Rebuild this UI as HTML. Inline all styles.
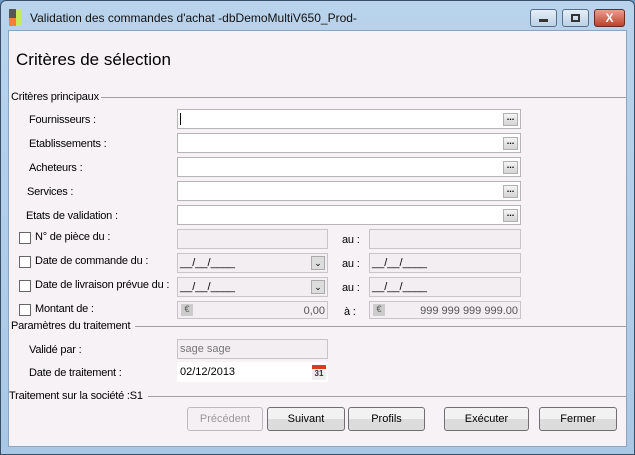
<!DOCTYPE html><html><head><style>
*{margin:0;padding:0;box-sizing:border-box}
body{width:635px;height:455px;overflow:hidden;font-family:"Liberation Sans",sans-serif;font-size:11px;color:#000;position:relative;background:#6f9cc4}
.a{position:absolute}
.frame{left:0;top:0;width:635px;height:455px;background:linear-gradient(#b9d3ec,#a9c8e6);border:1px solid #3a4e66;border-radius:6px 6px 0 0}
.client{left:8px;top:30px;width:619px;height:417px;background:#f6f2f6;border:1px solid #8aa5c2}
.in{position:absolute;height:20px;background:#fff;border:1px solid #b5b5b5}
.dis{background:#f2eef2;border-color:#c8c4c8}
.dots{position:absolute;right:2px;top:3px;width:15px;height:13px;background:linear-gradient(#f4f4f4,#d4d4d4);border:1px solid #b0b0b0;font-size:9px;line-height:6px;text-align:center;font-weight:bold}
.lbl{position:absolute;font-size:11px;letter-spacing:-.2px}
.cb{position:absolute;width:12px;height:12px;background:#fff;border:1px solid #666}
.line{position:absolute;height:1px;background:#a0a0a0}
.btn{position:absolute;top:407px;height:24px;border:1px solid #707070;border-radius:3px;background:linear-gradient(#f2f2f2 50%,#dcdcdc 50%);text-align:center;line-height:22px;font-size:11px}
.wb{position:absolute;top:9px;height:18px;border:1px solid #5a6e88;border-radius:3px;background:linear-gradient(#e4eef8,#bcd0e6)}
</style></head><body>
<div class="a frame"></div>
<div class="a" style="left:9px;top:9px;width:7px;height:9px;background:#555"></div>
<div class="a" style="left:9px;top:18px;width:7px;height:8px;background:#f08040"></div>
<div class="a" style="left:16px;top:9px;width:5px;height:17px;background:#c8e860"></div>
<div class="a" style="left:30px;top:11px;font-size:12px;color:#111">Validation des commandes d'achat -dbDemoMultiV650_Prod-</div>
<div class="wb" style="left:530px;width:27px"><div class="a" style="left:8px;top:9px;width:9px;height:3px;background:#333"></div></div>
<div class="wb" style="left:562px;width:27px"><div class="a" style="left:8px;top:4px;width:9px;height:8px;border:2px solid #333"></div></div>
<div class="wb" style="left:594px;width:31px;background:linear-gradient(#e8a090,#c0402a);border-color:#6a2a20;color:#fff;font-weight:bold;text-align:center;font-size:12px;line-height:16px">X</div>
<div class="a client"></div>
<div class="a" style="left:16px;top:50px;font-size:17px">Critères de sélection</div>
<div class="lbl" style="left:11px;top:91px">Critères principaux</div><div class="line" style="left:101px;top:97px;width:525px"></div>
<div class="lbl" style="left:29px;top:114px">Fournisseurs :</div>
<div class="lbl" style="left:29px;top:138px">Etablissements :</div>
<div class="lbl" style="left:29px;top:162px">Acheteurs :</div>
<div class="lbl" style="left:27px;top:186px">Services :</div>
<div class="lbl" style="left:26px;top:210px">Etats de validation :</div>
<div class="in" style="left:177px;top:109px;width:344px"><div class="a" style="left:2px;top:3px;width:1px;height:12px;background:#000"></div><div class="dots">...</div></div>
<div class="in" style="left:177px;top:133px;width:344px"><div class="dots">...</div></div>
<div class="in" style="left:177px;top:157px;width:344px"><div class="dots">...</div></div>
<div class="in" style="left:177px;top:181px;width:344px"><div class="dots">...</div></div>
<div class="in" style="left:177px;top:205px;width:344px"><div class="dots">...</div></div>
<div class="cb" style="left:19px;top:232px"></div><div class="lbl" style="left:35px;top:231px">N° de pièce du :</div>
<div class="cb" style="left:19px;top:256px"></div><div class="lbl" style="left:35px;top:255px">Date de commande du :</div>
<div class="cb" style="left:19px;top:280px"></div><div class="lbl" style="left:35px;top:279px">Date de livraison prévue du :</div>
<div class="cb" style="left:19px;top:304px"></div><div class="lbl" style="left:35px;top:303px">Montant de :</div>
<div class="in dis" style="left:177px;top:229px;width:151px"></div>
<div class="in dis" style="left:177px;top:253px;width:151px;padding:3px 2px">__/__/____<div class="a" style="right:2px;top:2px;width:14px;height:14px;background:#ddd;border:1px solid #aaa;font-size:9px;text-align:center;line-height:12px">&#8964;</div></div>
<div class="in dis" style="left:177px;top:277px;width:151px;padding:3px 2px">__/__/____<div class="a" style="right:2px;top:2px;width:14px;height:14px;background:#ddd;border:1px solid #aaa;font-size:9px;text-align:center;line-height:12px">&#8964;</div></div>
<div class="in dis" style="left:177px;top:301px;width:151px;height:18px;color:#555;text-align:right;padding:3px 2px">0,00<div class="a" style="left:3px;top:2px;width:12px;height:12px;background:#ccc;font-size:9px;text-align:center">€</div></div>
<div class="lbl" style="left:342px;top:234px">au :</div><div class="lbl" style="left:342px;top:258px">au :</div><div class="lbl" style="left:342px;top:282px">au :</div><div class="lbl" style="left:344px;top:306px">à :</div>
<div class="in dis" style="left:369px;top:229px;width:152px"></div>
<div class="in dis" style="left:369px;top:253px;width:152px;padding:3px 2px">__/__/____</div>
<div class="in dis" style="left:369px;top:277px;width:152px;padding:3px 2px">__/__/____</div>
<div class="in dis" style="left:369px;top:301px;width:152px;height:18px;color:#555;text-align:right;padding:3px 2px">999 999 999 999.00<div class="a" style="left:3px;top:2px;width:12px;height:12px;background:#ccc;font-size:9px;text-align:center">€</div></div>
<div class="lbl" style="left:11px;top:320px">Paramètres du traitement</div><div class="line" style="left:135px;top:326px;width:491px"></div>
<div class="lbl" style="left:29px;top:344px">Validé par :</div>
<div class="lbl" style="left:29px;top:367px">Date de traitement :</div>
<div class="in dis" style="left:177px;top:339px;width:151px;color:#777;padding:3px 2px">sage sage</div>
<div class="in" style="left:177px;top:362px;width:151px;border-color:#fff;padding:3px 2px">02/12/2013<div class="a" style="right:1px;top:2px;width:14px;height:15px;background:#eee;border-top:4px solid #d04020;font-size:8px;font-weight:bold;text-align:center;color:#333">31</div></div>
<div class="lbl" style="left:9px;top:390px">Traitement sur la société :S1</div><div class="line" style="left:148px;top:396px;width:478px"></div>
<div class="btn" style="left:187px;width:76px;color:#999;border-color:#bbb;background:#f4f0f4">Précédent</div>
<div class="btn" style="left:267px;width:78px">Suivant</div>
<div class="btn" style="left:348px;width:77px">Profils</div>
<div class="btn" style="left:444px;width:85px">Exécuter</div>
<div class="btn" style="left:539px;width:78px">Fermer</div>
</body></html>
